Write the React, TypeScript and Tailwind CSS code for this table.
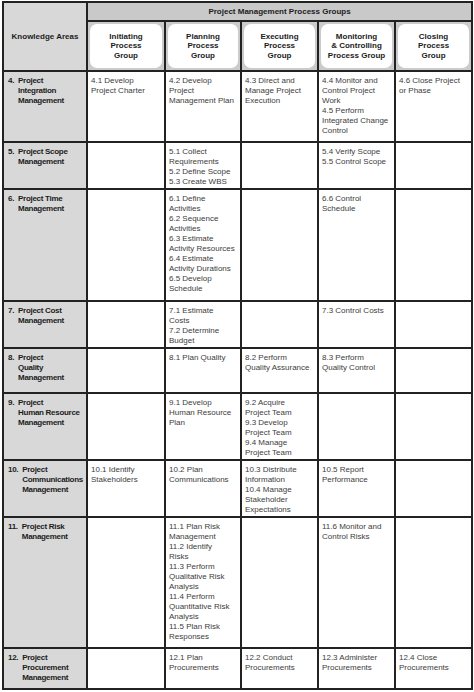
import React from "react";

type Row = {
  num: string;
  area: string[];
  height: string;
  cells: string[][];
};

const groups = [
  ["Initiating", "Process", "Group"],
  ["Planning", "Process", "Group"],
  ["Executing", "Process", "Group"],
  ["Monitoring", "& Controlling", "Process Group"],
  ["Closing", "Process", "Group"],
];

const rows: Row[] = [
  {
    num: "4.",
    area: ["Project", "Integration", "Management"],
    height: "h-[71px]",
    cells: [
      ["4.1 Develop", "Project Charter"],
      ["4.2 Develop", "Project", "Management Plan"],
      ["4.3 Direct and", "Manage Project", "Execution"],
      ["4.4 Monitor and", "Control Project", "Work", "4.5 Perform", "Integrated Change", "Control"],
      ["4.6 Close Project", "or Phase"],
    ],
  },
  {
    num: "5.",
    area: ["Project Scope", "Management"],
    height: "h-[47px]",
    cells: [
      [],
      ["5.1 Collect", "Requirements", "5.2 Define Scope", "5.3 Create WBS"],
      [],
      ["5.4 Verify Scope", "5.5 Control Scope"],
      [],
    ],
  },
  {
    num: "6.",
    area: ["Project Time", "Management"],
    height: "h-[112px]",
    cells: [
      [],
      [
        "6.1 Define",
        "Activities",
        "6.2 Sequence",
        "Activities",
        "6.3 Estimate",
        "Activity Resources",
        "6.4 Estimate",
        "Activity Durations",
        "6.5 Develop",
        "Schedule",
      ],
      [],
      ["6.6 Control", "Schedule"],
      [],
    ],
  },
  {
    num: "7.",
    area: ["Project Cost", "Management"],
    height: "h-[47px]",
    cells: [[], ["7.1 Estimate", "Costs", "7.2 Determine", "Budget"], [], ["7.3 Control Costs"], []],
  },
  {
    num: "8.",
    area: ["Project", "Quality", "Management"],
    height: "h-[45px]",
    cells: [[], ["8.1 Plan Quality"], ["8.2 Perform", "Quality Assurance"], ["8.3 Perform", "Quality Control"], []],
  },
  {
    num: "9.",
    area: ["Project", "Human Resource", "Management"],
    height: "h-[67px]",
    cells: [
      [],
      ["9.1 Develop", "Human Resource", "Plan"],
      ["9.2 Acquire", "Project Team", "9.3 Develop", "Project Team", "9.4 Manage", "Project Team"],
      [],
      [],
    ],
  },
  {
    num: "10.",
    area: ["Project", "Communications", "Management"],
    height: "h-[57px]",
    cells: [
      ["10.1 Identify", "Stakeholders"],
      ["10.2 Plan", "Communications"],
      ["10.3 Distribute", "Information", "10.4 Manage", "Stakeholder", "Expectations"],
      ["10.5 Report", "Performance"],
      [],
    ],
  },
  {
    num: "11.",
    area: ["Project Risk", "Management"],
    height: "h-[131px]",
    cells: [
      [],
      [
        "11.1 Plan Risk",
        "Management",
        "11.2 Identify",
        "Risks",
        "11.3 Perform",
        "Qualitative Risk",
        "Analysis",
        "11.4 Perform",
        "Quantitative Risk",
        "Analysis",
        "11.5 Plan Risk",
        "Responses",
      ],
      [],
      ["11.6 Monitor and", "Control Risks"],
      [],
    ],
  },
  {
    num: "12.",
    area: ["Project", "Procurement", "Management"],
    height: "h-[41px]",
    cells: [
      [],
      ["12.1 Plan", "Procurements"],
      ["12.2 Conduct", "Procurements"],
      ["12.3 Administer", "Procurements"],
      ["12.4 Close", "Procurements"],
    ],
  },
];

const line = "border-2 border-[#222]";

export default function App() {
  return (
    <div className="min-h-screen bg-white pl-[2px] pt-[1px] font-['Liberation_Sans',Arial,sans-serif] text-[8px] leading-[10px]">
      <table className="w-[471px] table-fixed border-collapse">
        <colgroup>
          <col className="w-[84px]" />
          <col className="w-[78px]" />
          <col className="w-[76px]" />
          <col className="w-[77px]" />
          <col className="w-[77px]" />
          <col className="w-[77px]" />
        </colgroup>
        <thead>
          <tr className="h-[19px]">
            <th rowSpan={2} className={`${line} bg-[#d8d8d8] text-center font-bold text-[#1c1c1c]`}>
              Knowledge Areas
            </th>
            <th colSpan={5} className={`${line} bg-[#c9c9c9] text-center font-bold text-[#1c1c1c]`}>
              Project Management Process Groups
            </th>
          </tr>
          <tr className="h-[50px]">
            {groups.map((g) => (
              <th key={g[0]} className={`${line} bg-[#cbcbcb] p-[2px]`}>
                <div className="flex h-[44px] flex-col items-center justify-center rounded-[7px] bg-white font-bold leading-[9.5px] text-[#1c1c1c]">
                  {g.map((t) => (
                    <span key={t}>{t}</span>
                  ))}
                </div>
              </th>
            ))}
          </tr>
        </thead>
        <tbody>
          {rows.map((r) => (
            <tr key={r.num} className={r.height}>
              <td className={`${line} bg-[#d8d8d8] pl-[4px] pr-0 pt-[4px] align-top font-bold tracking-[-0.3px] text-[#1c1c1c]`}>
                <div className="flex gap-[4px] whitespace-nowrap">
                  <span>{r.num}</span>
                  <div className="flex flex-col">
                    {r.area.map((t) => (
                      <span key={t}>{t}</span>
                    ))}
                  </div>
                </div>
              </td>
              {r.cells.map((c, i) => (
                <td key={i} className={`${line} px-[3px] pt-[4px] align-top text-[#3d3d3d]`}>
                  <div className="flex flex-col whitespace-nowrap">
                    {c.map((t, j) => (
                      <span key={j}>{t}</span>
                    ))}
                  </div>
                </td>
              ))}
            </tr>
          ))}
        </tbody>
      </table>
    </div>
  );
}
